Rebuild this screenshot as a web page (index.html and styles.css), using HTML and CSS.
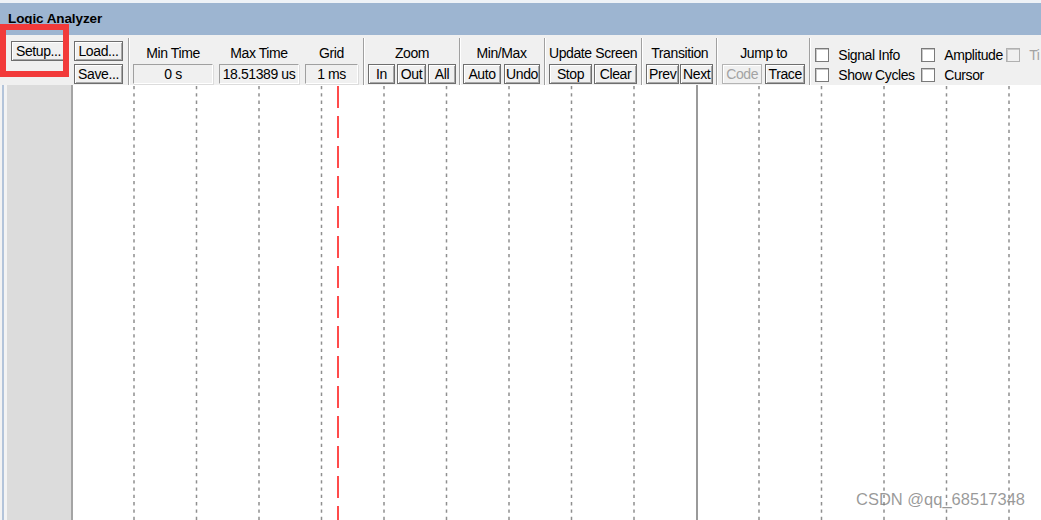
FILE: index.html
```html
<!DOCTYPE html>
<html>
<head>
    <meta charset="UTF-8">
    <title>Logic Analyzer</title>
    <link rel="stylesheet" href="styles.css">
</head>

<body>
    <div class="analyzer">
        <div class="caption">Logic Analyzer</div>

        <div class="toolbar">
            <div class="group setup">
                <button class="btn">Setup...</button>
            </div>

            <div class="group file">
                <button class="btn">Load...</button>
                <button class="btn">Save...</button>
            </div>

            <div class="sep"></div>

            <div class="group time first">
                <span class="lbl">Min Time</span>
                <span class="field">0 s</span>
            </div>
            <div class="group time">
                <span class="lbl">Max Time</span>
                <span class="field">18.51389 us</span>
            </div>
            <div class="group time grid-val">
                <span class="lbl">Grid</span>
                <span class="field">1 ms</span>
            </div>

            <div class="sep"></div>

            <div class="group zoom">
                <span class="lbl">Zoom</span>
                <div class="row">
                    <button class="btn b-in">In</button>
                    <button class="btn b-out">Out</button>
                    <button class="btn b-all">All</button>
                </div>
            </div>

            <div class="sep"></div>

            <div class="group minmax">
                <span class="lbl">Min/Max</span>
                <div class="row">
                    <button class="btn b-auto">Auto</button>
                    <button class="btn b-undo">Undo</button>
                </div>
            </div>

            <div class="sep"></div>

            <div class="group update">
                <span class="lbl">Update Screen</span>
                <div class="row">
                    <button class="btn b-stop">Stop</button>
                    <button class="btn b-clear">Clear</button>
                </div>
            </div>

            <div class="sep"></div>

            <div class="group transition">
                <span class="lbl">Transition</span>
                <div class="row">
                    <button class="btn b-prev">Prev</button>
                    <button class="btn b-next">Next</button>
                </div>
            </div>

            <div class="sep"></div>

            <div class="group jump">
                <span class="lbl">Jump to</span>
                <div class="row">
                    <button class="btn b-code" disabled>Code</button>
                    <button class="btn b-trace">Trace</button>
                </div>
            </div>

            <div class="sep"></div>

            <div class="checks">
                <div class="check-col c1">
                    <label class="check"><span class="box"></span>Signal Info</label>
                    <label class="check"><span class="box"></span>Show Cycles</label>
                </div>
                <div class="check-col c2">
                    <label class="check"><span class="box"></span>Amplitude</label>
                    <label class="check"><span class="box"></span>Cursor</label>
                </div>
                <div class="check-col c3">
                    <label class="check off"><span class="box"></span>Ti</label>
                </div>
            </div>
        </div>

        <div class="trace">
            <div class="names"></div>
            <div class="plot">
                <svg width="968" height="435" viewBox="0 0 968 435">
                    <g stroke="#8f8f8f" stroke-width="1.5" stroke-dasharray="3.3 4">
                        <line x1="61" y1="1" x2="61" y2="435"/>
                        <line x1="123.5" y1="1" x2="123.5" y2="435"/>
                        <line x1="186" y1="1" x2="186" y2="435"/>
                        <line x1="248.5" y1="1" x2="248.5" y2="435"/>
                        <line x1="311" y1="1" x2="311" y2="435"/>
                        <line x1="373.5" y1="1" x2="373.5" y2="435"/>
                        <line x1="436" y1="1" x2="436" y2="435"/>
                        <line x1="498.5" y1="1" x2="498.5" y2="435"/>
                        <line x1="561" y1="1" x2="561" y2="435"/>
                        <line x1="686" y1="1" x2="686" y2="435"/>
                        <line x1="748.5" y1="1" x2="748.5" y2="435"/>
                        <line x1="811" y1="1" x2="811" y2="435"/>
                        <line x1="873.5" y1="1" x2="873.5" y2="435"/>
                        <line x1="936" y1="1" x2="936" y2="435"/>
                    </g>
                    <!-- trigger / cursor lines -->
                    <line x1="624" y1="0" x2="624" y2="435" stroke="#9a9a9a" stroke-width="2"/>
                    <line x1="265" y1="1" x2="265" y2="435" stroke="#ff4b4b" stroke-width="2" stroke-dasharray="22 8"/>
                </svg>
            </div>
        </div>

        <div class="highlight"></div>
        <div class="mark">CSDN @qq_68517348</div>
    </div>
</body>
</html>
```

FILE: styles.css
```css
body {
    margin: 0;
    background: #f0f0f0;
    font-family: "Liberation Sans", Arial, sans-serif;
    font-size: 14px;
    letter-spacing: -0.4px;
    color: #000;
}

.analyzer {
    position: relative;
    width: 1041px;
    height: 520px;
    overflow: hidden;
}

.caption {
    height: 32px;
    line-height: 32px;
    border-top: 3px solid #eef2f7;
    background: #9db5d1;
    padding-left: 8px;
    font-size: 13.5px;
    letter-spacing: -0.1px;
    font-weight: bold;
}

/* toolbar */

.toolbar {
    display: flex;
    height: 50px;
    padding: 6px 0 0 11px;
    box-sizing: border-box;
    background: #f0f0f0;
    white-space: nowrap;
    overflow: hidden;
}

.toolbar > * {
    flex-shrink: 0;
}

.group {
    display: flex;
    flex-direction: column;
    align-items: stretch;
}

.lbl {
    height: 23px;
    line-height: 24px;
    text-align: center;
}

.row {
    display: flex;
    gap: 2px;
}

.row .btn {
    flex-shrink: 0;
}

.btn {
    height: 20px;
    padding: 0;
    margin: 0;
    font-family: inherit;
    font-size: 14px;
    letter-spacing: -0.4px;
    line-height: 18px;
    color: #000;
    background: #f0f0f0;
    border: 1px solid #6e6e6e;
    box-shadow: inset 1px 1px #fff, inset -1px -1px #a8a8a8;
    text-align: center;
}

.btn:disabled {
    color: #a3a3a3;
    border-color: #b4b4b4;
    box-shadow: inset 1px 1px #fff;
}

.setup .btn {
    width: 55px;
}

.file {
    margin-left: 8px;
    gap: 3px;
}

.file .btn {
    width: 49px;
}

.sep {
    width: 0;
    margin-top: -3px;
    border-left: 1px solid #a0a0a0;
    border-right: 1px solid #fff;
    align-self: stretch;
}

.file + .sep {
    margin-left: 5px;
}

.time {
    width: 80px;
    margin-left: 6px;
}

.time.first {
    margin-left: 3px;
}

.time.grid-val {
    width: 53px;
}

.field {
    height: 20px;
    line-height: 19px;
    box-sizing: border-box;
    text-align: center;
    border: 1px solid #a0a0a0;
    border-right-color: #fff;
    border-bottom-color: #fff;
    box-shadow: 1px 1px #dcdcdc;
}

.grid-val + .sep {
    margin-left: 5px;
}

.zoom {
    margin: 0 3px;
}

.b-in { width: 27px; }
.b-out { width: 29px; }
.b-all { width: 28px; }

.minmax {
    margin: 0 4px 0 2px;
}

.minmax .row { gap: 3px; }
.b-auto { width: 38px; }
.b-undo { width: 36px; }

.update {
    margin: 0 4px 0 3px;
}

.b-stop, .b-clear { width: 43px; }

.transition {
    margin: 0 3px;
}

.transition .row { gap: 1px; }
.b-prev, .b-next { width: 33px; }

.jump {
    margin: 0 4px;
}

.jump .row { gap: 3px; }
.b-code, .b-trace { width: 40px; }

/* checkboxes */

.checks {
    display: flex;
    padding: 4px 0 0 4px;
}

.check-col {
    display: flex;
    flex-direction: column;
    flex-shrink: 0;
}

.c1 { width: 106px; }
.c2 { width: 85px; }

.check {
    display: flex;
    align-items: center;
    height: 20px;
}

.box {
    width: 12px;
    height: 12px;
    margin-right: 9px;
    background: #fff;
    border: 1px solid #7a7a7a;
    box-shadow: inset 1px 1px #c8c8c8;
}

.check.off {
    color: #a3a3a3;
}

.check.off .box {
    background: #f0f0f0;
    border-color: #b0b0b0;
}

/* waveform area */

.trace {
    display: flex;
    height: 435px;
}

.names {
    width: 64px;
    flex-shrink: 0;
    background: #dcdcdc;
    border-left: 7px solid #f3f3f3;
    border-right: 2px solid #a4a4a4;
    position: relative;
}

.names::before {
    content: "";
    position: absolute;
    left: -5px;
    top: 0;
    bottom: 0;
    width: 2px;
    background: #b3c4da;
}

.plot {
    flex: 1;
    background: #fff;
}

.plot svg {
    display: block;
}

/* annotation overlay */

.highlight {
    position: absolute;
    left: 0;
    top: 24px;
    width: 69px;
    height: 53px;
    box-sizing: border-box;
    border: 6px solid #f23a3a;
}

.mark {
    position: absolute;
    left: 856px;
    top: 490px;
    font-size: 16.5px;
    letter-spacing: 0;
    color: rgba(120, 120, 120, 0.75);
}
```
